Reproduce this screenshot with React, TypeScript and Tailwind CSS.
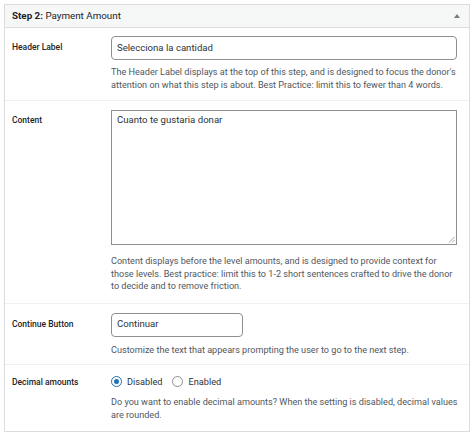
export default function App() {
  const font = { fontFamily: 'Roboto, "Liberation Sans", sans-serif' };
  return (
    <div className="w-[474px] h-[435px] bg-white pt-[4px] pl-[4px]" style={font}>
      <div className="w-[466px] border border-[#dcdcde] bg-white">
        <div className="flex h-[23px] items-center justify-between border-b border-[#dcdcde] bg-[#f6f7f7] pl-[7px] pr-[8px] text-[9.8px] text-[#1d2327]">
          <span>
            <span className="font-bold">Step 2:</span> Payment Amount
          </span>
          <svg width="6" height="4" viewBox="0 0 6 4" className="mr-[1px]">
            <path d="M0 4 L3 0 L6 4 Z" fill="#787c82" />
          </svg>
        </div>

        <Row label="Header Label" className="pt-[8px] pb-[9px]">
          <div className="flex h-[24px] w-[346px] items-center rounded-[4px] border border-[#8c8f94] px-[5px] text-[9.6px] text-[#2c3338]">
            Selecciona la cantidad
          </div>
          <p className="mt-[6px] whitespace-nowrap text-[9.1px] leading-[12.5px] text-[#50575e]">
            The Header Label displays at the top of this step, and is designed to focus the donor's
            <br />
            attention on what this step is about. Best Practice: limit this to fewer than 4 words.
          </p>
        </Row>

        <Row label="Content" className="pt-[9px] pb-[10px]" labelPt="pt-[4px]">
          <div className="relative h-[135px] w-[346px] border border-[#8c8f94] px-[5px] pt-[2px] text-[9.6px] text-[#2c3338]">
            Cuanto te gustaria donar
            <svg width="7" height="7" viewBox="0 0 7 7" className="absolute bottom-[1px] right-[1px]">
              <path d="M6.5 1 L1 6.5 M6.5 4 L4 6.5" stroke="#8c8f94" strokeWidth="0.8" />
            </svg>
          </div>
          <p className="mt-[10px] whitespace-nowrap text-[9.1px] leading-[12.5px] text-[#50575e]">
            Content displays before the level amounts, and is designed to provide context for
            <br />
            those levels. Best practice: limit this to 1-2 short sentences crafted to drive the donor
            <br />
            to decide and to remove friction.
          </p>
        </Row>

        <Row label="Continue Button" className="pt-[9px] pb-[8px]">
          <div className="flex h-[24px] w-[132px] items-center rounded-[4px] border border-[#8c8f94] px-[5px] text-[9.6px] text-[#2c3338]">
            Continuar
          </div>
          <p className="mt-[7px] whitespace-nowrap text-[9.1px] leading-[12.5px] text-[#50575e]">
            Customize the text that appears prompting the user to go to the next step.
          </p>
        </Row>

        <Row label="Decimal amounts" className="pt-[10px] pb-[10px]" labelPt="pt-[1px]" last>
          <div className="flex h-[13px] items-center text-[9.2px] text-[#2c3338]">
            <span className="mr-[5px] flex h-[11px] w-[11px] items-center justify-center rounded-full border border-[#2271b1]">
              <span className="h-[5px] w-[5px] rounded-full bg-[#2271b1]" />
            </span>
            Disabled
            <span className="ml-[10px] mr-[5px] h-[11px] w-[11px] rounded-full border border-[#8c8f94]" />
            Enabled
          </div>
          <p className="mt-[8px] whitespace-nowrap text-[9.1px] leading-[12.5px] text-[#50575e]">
            Do you want to enable decimal amounts? When the setting is disabled, decimal values
            <br />
            are rounded.
          </p>
        </Row>
      </div>
    </div>
  );
}

function Row({
  label,
  children,
  className = '',
  labelPt = 'pt-[5px]',
  last = false,
}: {
  label: string;
  children: React.ReactNode;
  className?: string;
  labelPt?: string;
  last?: boolean;
}) {
  return (
    <div className={`flex ${last ? '' : 'border-b border-[#f0f0f1]'} pr-[12px] ${className}`}>
      <div className={`w-[106px] shrink-0 pl-[7px] text-[8.5px] font-medium text-[#1d2327] ${labelPt}`}>{label}</div>
      <div className="min-w-0 flex-1">{children}</div>
    </div>
  );
}
